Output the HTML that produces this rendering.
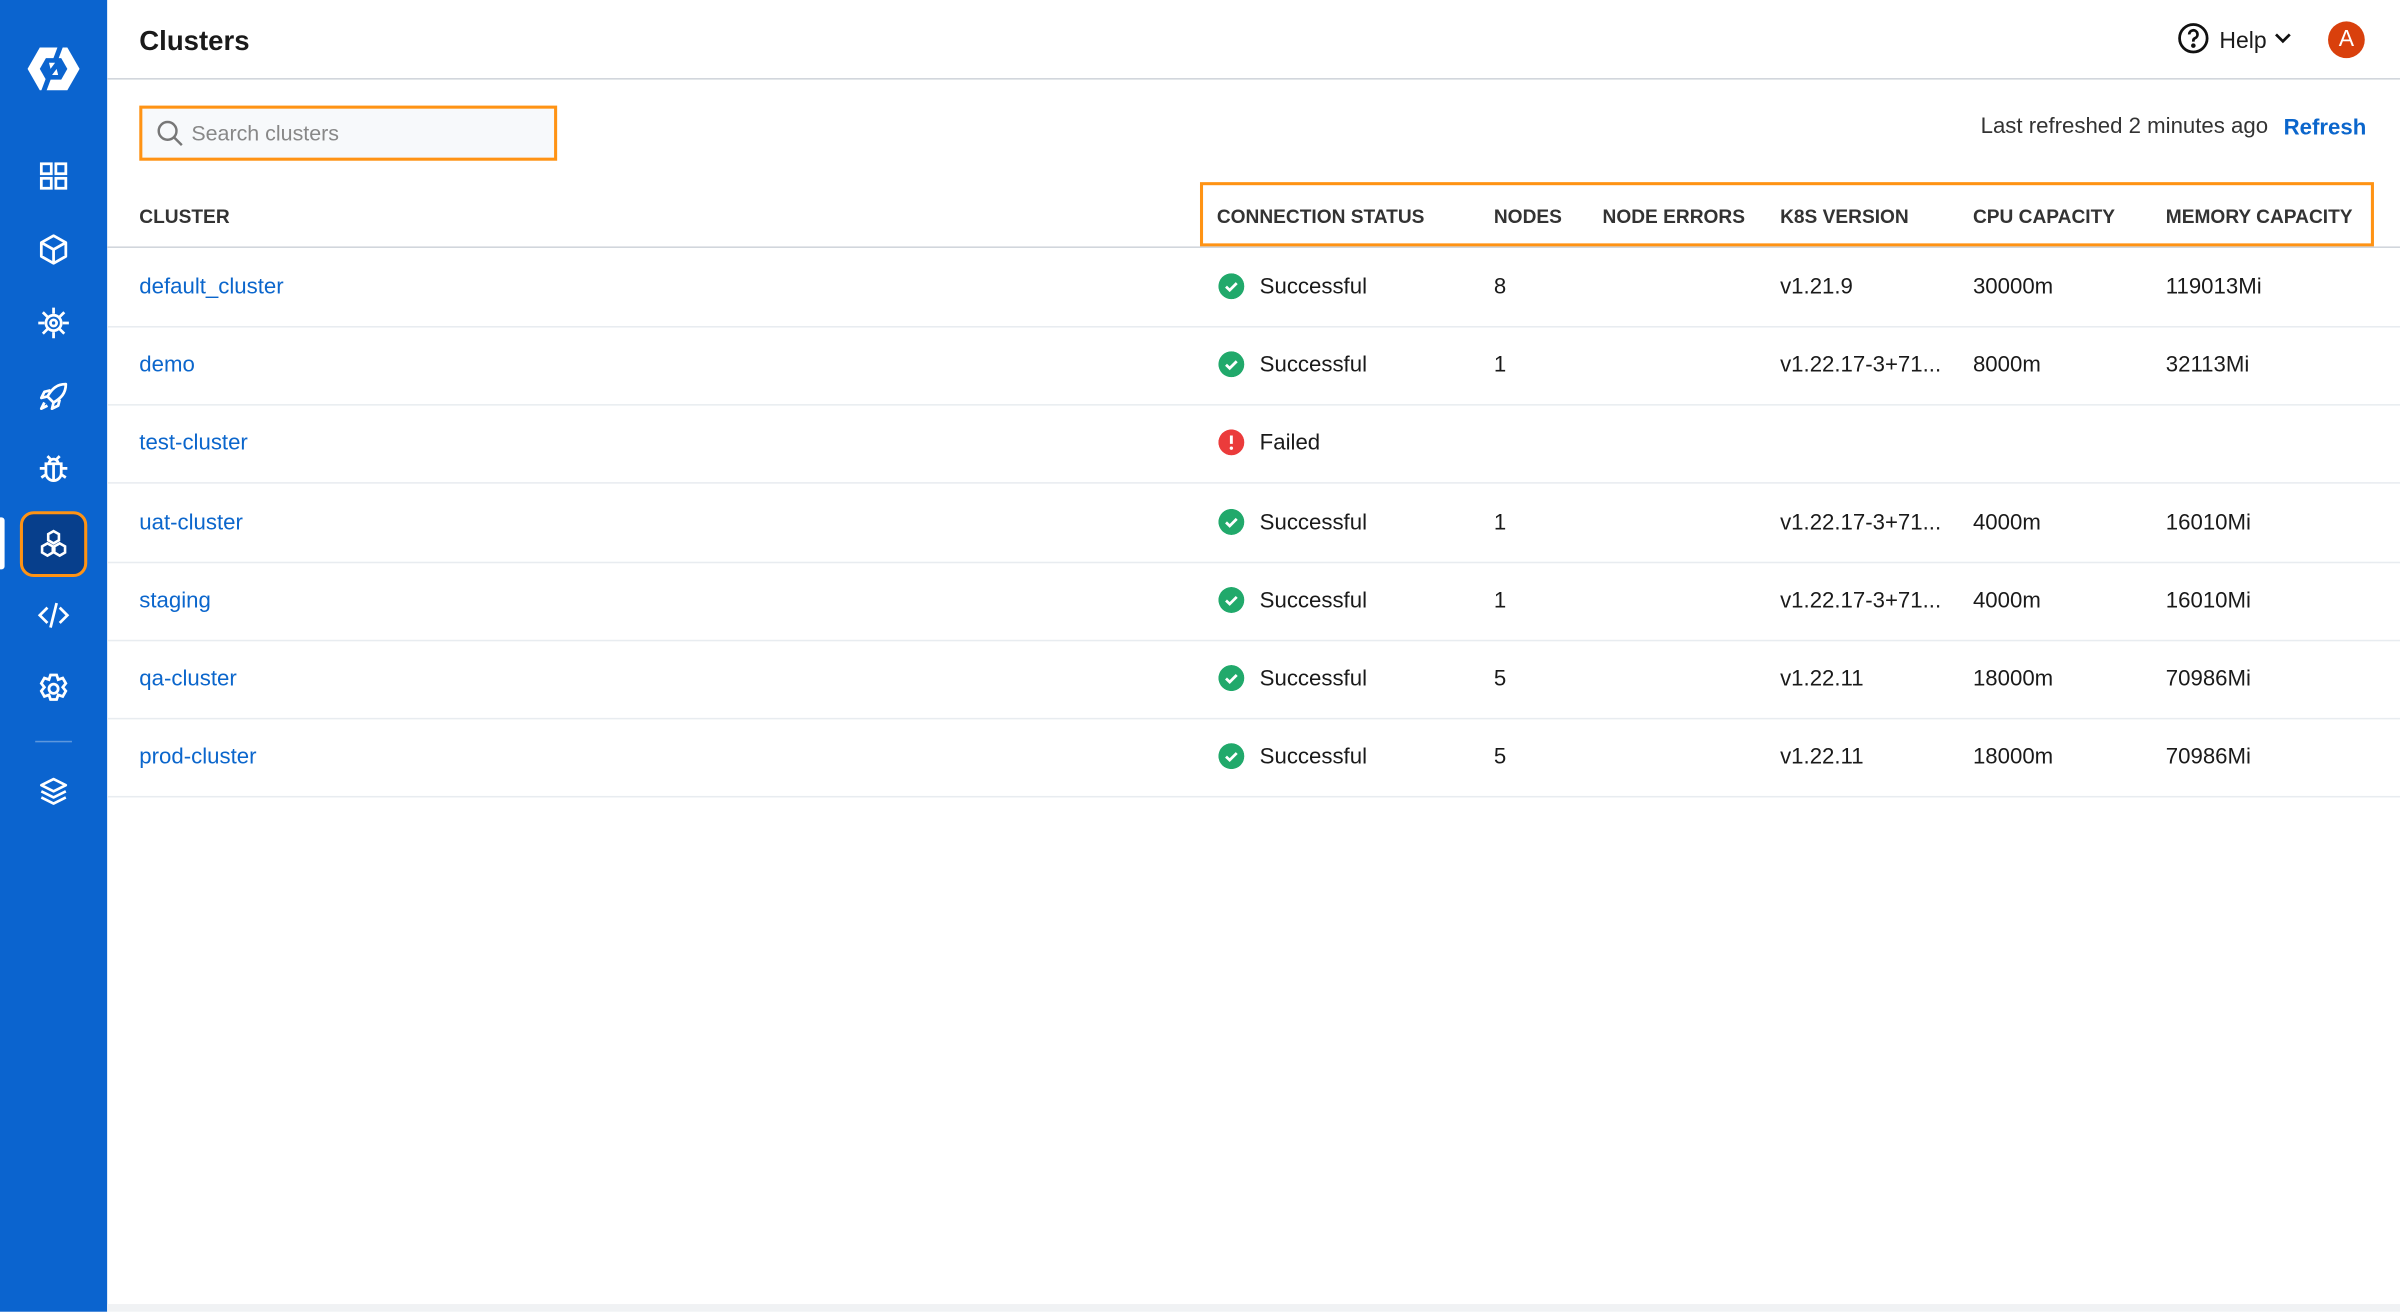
<!DOCTYPE html>
<html><head><meta charset="utf-8"><style>
*{margin:0;padding:0;box-sizing:border-box}
html,body{width:2400px;height:1312px;overflow:hidden;background:#fff}
#w{width:1568px;height:857px;position:relative;transform:scale(1.5306);transform-origin:0 0;font-family:"Liberation Sans",sans-serif;color:#1a1a1a}
.a{position:absolute}
#sb{left:0;top:0;width:70px;height:857px;background:#0b64cf}
.ic{position:absolute;left:23px;width:24px;height:24px}
.t{position:absolute;font-size:14.5px;white-space:nowrap;transform:translateY(-45%)}
.h{position:absolute;font-size:12.5px;font-weight:bold;color:#333;transform:translateY(-45%);white-space:nowrap}
.ln{position:absolute;left:70px;right:0;height:1px;background:#e8ecf0}
.lk{color:#0b66cc}
.st{position:absolute;width:17px;height:17px;border-radius:50%;transform:translateY(-50%)}
</style></head><body><div id="w">
<div id="sb" class="a">
<svg class="a" style="left:18px;top:30px" width="34" height="30" viewBox="0 0 34 30"><path d="M8 1h18l8 14-8 14H8L0 15z" fill="#fff"/><path d="M12 8h10l4 7-4 7H12l-4-7z" fill="#0b64cf"/><path d="M22 -1L10 31" stroke="#0b64cf" stroke-width="3.2"/><path d="M14 11l4 0-3 4z M20 19l-4 0 3-4z" fill="#fff"/></svg>
<svg class="ic" style="top:103px" viewBox="0 0 24 24" fill="none" stroke="#fff" stroke-width="1.8"><rect x="4" y="4" width="6.5" height="6.5"/><rect x="13.5" y="4" width="6.5" height="6.5"/><rect x="4" y="13.5" width="6.5" height="6.5"/><rect x="13.5" y="13.5" width="6.5" height="6.5"/></svg>
<svg class="ic" style="top:151px" viewBox="0 0 24 24" fill="none" stroke="#fff" stroke-width="1.8" stroke-linejoin="round"><path d="M12 3l8 4.5v9L12 21l-8-4.5v-9z M4 7.5l8 4.5 8-4.5 M12 12v9"/></svg>
<svg class="ic" style="top:199px" viewBox="0 0 24 24" fill="none" stroke="#fff" stroke-width="1.8"><circle cx="12" cy="12" r="5"/><circle cx="12" cy="12" r="2"/><path d="M12 2v4M12 18v4M2 12h4M18 12h4M5 5l3 3M16 16l3 3M19 5l-3 3M8 16l-3 3"/></svg>
<svg class="ic" style="top:247px" viewBox="0 0 24 24" fill="none" stroke="#fff" stroke-width="1.8" stroke-linejoin="round"><path d="M20 4c-6 0-9 3-12 8l4 4c5-3 8-6 8-12z M8 12l-4 1 2-4 4-1 M12 16l-1 4 4-2 1-4 M6 16l-2 4 4-2"/></svg>
<svg class="ic" style="top:294px" viewBox="0 0 24 24" fill="none" stroke="#fff" stroke-width="1.8"><path d="M7 9h10v6a5 5 0 0 1-10 0z M9 9a3 3 0 0 1 6 0 M12 9v11 M3 12h4M17 12h4M4 18l3-2M20 18l-3-2M8 4l2 2M16 4l-2 2"/></svg>
<div class="a" style="left:0;top:338px;width:3px;height:34px;background:#fff;border-radius:0 2px 2px 0"></div>
<div class="a" style="left:13px;top:334px;width:44px;height:43px;background:#073f8c;border:2.5px solid #ff9314;border-radius:9px"></div>
<svg class="ic" style="top:343px" viewBox="0 0 24 24" fill="none" stroke="#fff" stroke-width="1.7"><path d="M12 4l3.5 2v4L12 12 8.5 10V6z M8 12l3.5 2v4L8 20l-3.5-2v-4z M16 12l3.5 2v4L16 20l-3.5-2v-4z"/></svg>
<svg class="ic" style="top:390px" viewBox="0 0 24 24" fill="none" stroke="#fff" stroke-width="1.8"><path d="M8 7l-5 5 5 5M16 7l5 5-5 5M14 4l-4 16"/></svg>
<svg class="ic" style="top:438px" viewBox="0 0 24 24" fill="none" stroke="#fff" stroke-width="1.8"><circle cx="12" cy="12" r="3"/><path d="M10 3h4l1 3 3-1 2 3.5-2 2.5 2 2.5-2 3.5-3-1-1 3h-4l-1-3-3 1-2-3.5 2-2.5-2-2.5 2-3.5 3 1z"/></svg>
<div class="a" style="left:23px;top:484px;width:24px;height:1px;background:#5d97dd"></div>
<svg class="ic" style="top:505px" viewBox="0 0 24 24" fill="none" stroke="#fff" stroke-width="1.7" stroke-linejoin="round"><path d="M12 4l8 4-8 4-8-4z M4 12l8 4 8-4 M4 16l8 4 8-4"/></svg>
</div>
<div class="t" style="left:91px;top:26px;font-size:18px;font-weight:bold">Clusters</div>
<svg class="a" style="left:1422px;top:14px" width="22" height="22" viewBox="0 0 22 22" fill="none" stroke="#111" stroke-width="1.8"><circle cx="11" cy="11" r="9"/><path d="M8.3 8.5a2.7 2.7 0 1 1 3.7 2.5c-.7.3-1 .8-1 1.6v.6"/><circle cx="11" cy="15.8" r=".6" fill="#111"/></svg>
<div class="t" style="left:1450px;top:26px;font-size:15px">Help</div>
<svg class="a" style="left:1486px;top:21px" width="11" height="8" viewBox="0 0 11 8" fill="none" stroke="#111" stroke-width="1.8"><path d="M1 1.5l4.5 4.5 4.5-4.5"/></svg>
<div class="a" style="left:1521px;top:14px;width:24px;height:24px;border-radius:50%;background:#d9400c;color:#fff;font-size:15px;text-align:center;line-height:24px">A</div>
<div class="a" style="left:70px;right:0;top:51px;height:1px;background:#cfd4da"></div>
<div class="a" style="left:91px;top:69px;width:273px;height:36px;border:2.5px solid #ff9314;background:#f7f9fb"></div>
<svg class="a" style="left:102px;top:78px" width="18" height="18" viewBox="0 0 18 18" fill="none" stroke="#777" stroke-width="1.6"><circle cx="7.5" cy="7.5" r="5.8"/><path d="M11.8 11.8l5 5"/></svg>
<div class="t" style="left:125px;top:86px;font-size:14px;color:#888">Search clusters</div>
<div class="t" style="left:1294px;top:82px;font-size:14.5px;color:#333">Last refreshed 2 minutes ago</div>
<div class="t" style="left:1492px;top:83px;font-size:14.5px;font-weight:bold;color:#0b66cc">Refresh</div>
<div class="h" style="left:91px;top:141px">CLUSTER</div>
<div class="a" style="left:784px;top:119px;width:767px;height:42px;border:2.5px solid #ff9314"></div>
<div class="h" style="left:795px;top:141px">CONNECTION STATUS</div>
<div class="h" style="left:976px;top:141px">NODES</div>
<div class="h" style="left:1047px;top:141px">NODE ERRORS</div>
<div class="h" style="left:1163px;top:141px">K8S VERSION</div>
<div class="h" style="left:1289px;top:141px">CPU CAPACITY</div>
<div class="h" style="left:1415px;top:141px">MEMORY CAPACITY</div>
<div class="a" style="left:70px;right:0;top:161px;height:1px;background:#cfd4da"></div>
<div id="rows"></div>
<div class="a" style="left:70px;right:0;top:852px;height:5px;background:#f0f2f4"></div>
</div>
<script>
var d=[["default_cluster",1,"8","v1.21.9","30000m","119013Mi"],["demo",1,"1","v1.22.17-3+71...","8000m","32113Mi"],["test-cluster",0,"","","",""],["uat-cluster",1,"1","v1.22.17-3+71...","4000m","16010Mi"],["staging",1,"1","v1.22.17-3+71...","4000m","16010Mi"],["qa-cluster",1,"5","v1.22.11","18000m","70986Mi"],["prod-cluster",1,"5","v1.22.11","18000m","70986Mi"]];
var h="";d.forEach(function(r,i){var y=187+i*51.2;
h+='<div class="t lk" style="left:91px;top:'+y+'px">'+r[0]+'</div>';
h+=r[1]?'<svg class="st" style="left:796px;top:'+y+'px" viewBox="0 0 17 17"><circle cx="8.5" cy="8.5" r="8.5" fill="#21a96b"/><path d="M5 8.8l2.4 2.3 4.6-4.6" fill="none" stroke="#fff" stroke-width="1.8"/></svg>':'<svg class="st" style="left:796px;top:'+y+'px" viewBox="0 0 17 17"><circle cx="8.5" cy="8.5" r="8.5" fill="#eb3b3b"/><path d="M8.5 4v5.5" stroke="#fff" stroke-width="1.9"/><circle cx="8.5" cy="12.3" r="1.1" fill="#fff"/></svg>';
h+='<div class="t" style="left:823px;top:'+y+'px">'+(r[1]?"Successful":"Failed")+'</div>';
h+='<div class="t" style="left:976px;top:'+y+'px">'+r[2]+'</div><div class="t" style="left:1163px;top:'+y+'px">'+r[3]+'</div><div class="t" style="left:1289px;top:'+y+'px">'+r[4]+'</div><div class="t" style="left:1415px;top:'+y+'px">'+r[5]+'</div>';
h+='<div class="ln" style="top:'+(213+i*51.2)+'px"></div>';});
document.getElementById("rows").outerHTML=h;
</script>
</body></html>
